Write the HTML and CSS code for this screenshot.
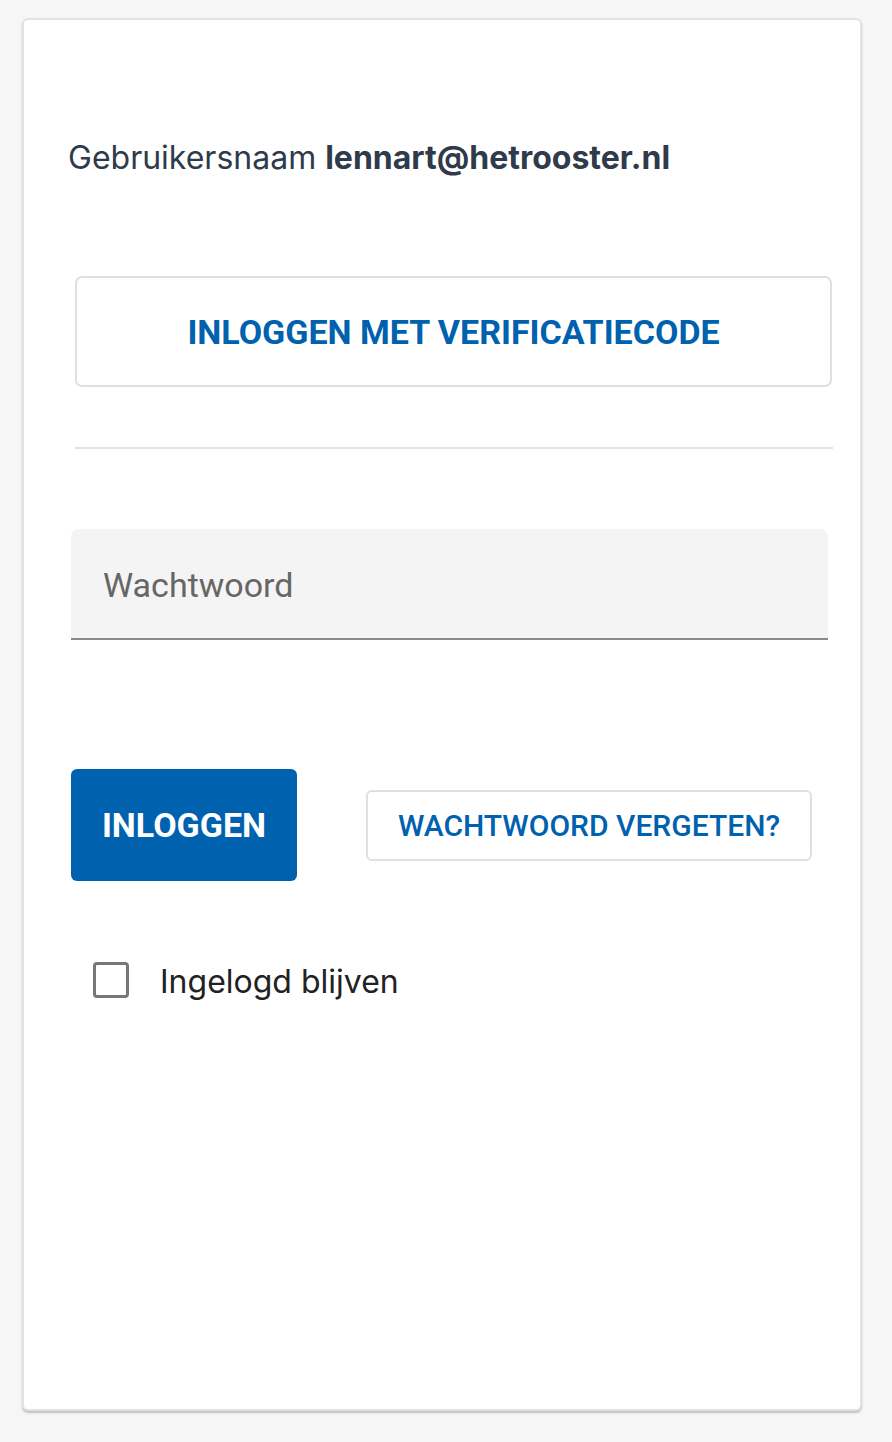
FILE: index.html
```html
<!DOCTYPE html>
<html lang="nl">
<head>
<meta charset="utf-8">
<link rel="stylesheet" href="styles.css">
</head>
<body>
<div class="card">
  <p class="user">Gebruikersnaam <strong>lennart@hetrooster.nl</strong></p>
  <div class="verify-wrap">
    <button class="verify">INLOGGEN MET VERIFICATIECODE</button>
  </div>
  <hr class="divider">
  <div class="field">
    <span class="placeholder">Wachtwoord</span>
  </div>
  <div class="actions">
    <button class="primary">INLOGGEN</button>
    <button class="secondary">WACHTWOORD VERGETEN?</button>
  </div>
  <label class="remember">
    <span class="box"></span>
    <span class="remember-text">Ingelogd blijven</span>
  </label>
</div>
</body>
</html>
```
FILE: styles.css
```css
html, body {
  margin: 0;
  padding: 0;
  background: #f6f6f6;
}
body {
  padding: 18px 30px 31px 22px;
  font-family: Inter, "Noto Sans", sans-serif;
}
.card {
  box-sizing: border-box;
  height: 1393px;
  background: #fff;
  border: 2px solid #e2e2e2;
  border-radius: 6px;
  box-shadow: 0 2px 2px rgba(0,0,0,0.22);
  padding: 0 0 0 46px;
}
.user {
  margin: 0 0 0 -2px;
  padding-top: 120px;
  font-size: 32px;
  line-height: 36px;
  color: #2f3a4a;
}
.user strong {
  font-weight: 700;
}
.verify-wrap {
  margin-top: 100px;
  padding-left: 5px;
  width: 757px;
}
button {
  font-family: Roboto, sans-serif;
  cursor: pointer;
}
.verify {
  box-sizing: border-box;
  width: 757px;
  height: 111px;
  background: #fff;
  border: 2px solid #e0e0e0;
  border-radius: 7px;
  color: #0061af;
  font-size: 34px;
  font-weight: 700;
  letter-spacing: 0;
}
.divider {
  margin: 60px 0 0 5px;
  width: 758px;
  height: 0;
  border: 0;
  border-top: 2px solid #e2e2e2;
}
.field {
  box-sizing: border-box;
  margin-top: 80px;
  margin-left: 1px;
  width: 757px;
  height: 111px;
  background: #f4f4f4;
  border-bottom: 2px solid #8b8b8b;
  border-radius: 8px 8px 0 0;
  padding-left: 32px;
  display: flex;
  align-items: center;
}
.placeholder {
  font-family: Roboto, sans-serif;
  font-size: 34px;
  color: #666;
  padding-top: 2px;
}
.actions {
  margin-top: 129px;
  margin-left: 1px;
  display: flex;
  align-items: center;
  gap: 69px;
}
.primary {
  width: 226px;
  height: 112px;
  background: #0061af;
  border: 0;
  border-radius: 6px;
  color: #fff;
  font-size: 34px;
  font-weight: 700;
}
.secondary {
  box-sizing: border-box;
  width: 446px;
  height: 71px;
  background: #fff;
  border: 2px solid #e0e0e0;
  border-radius: 6px;
  color: #0061af;
  font-size: 30px;
  font-weight: 500;
}
.remember {
  margin-top: 78px;
  margin-left: 23px;
  display: flex;
  align-items: center;
  gap: 31px;
}
.box {
  box-sizing: border-box;
  width: 36px;
  height: 36px;
  border: 3px solid #777;
  border-radius: 4px;
}
.remember-text {
  font-size: 32px;
  color: #222;
  padding-top: 3px;
}
```
